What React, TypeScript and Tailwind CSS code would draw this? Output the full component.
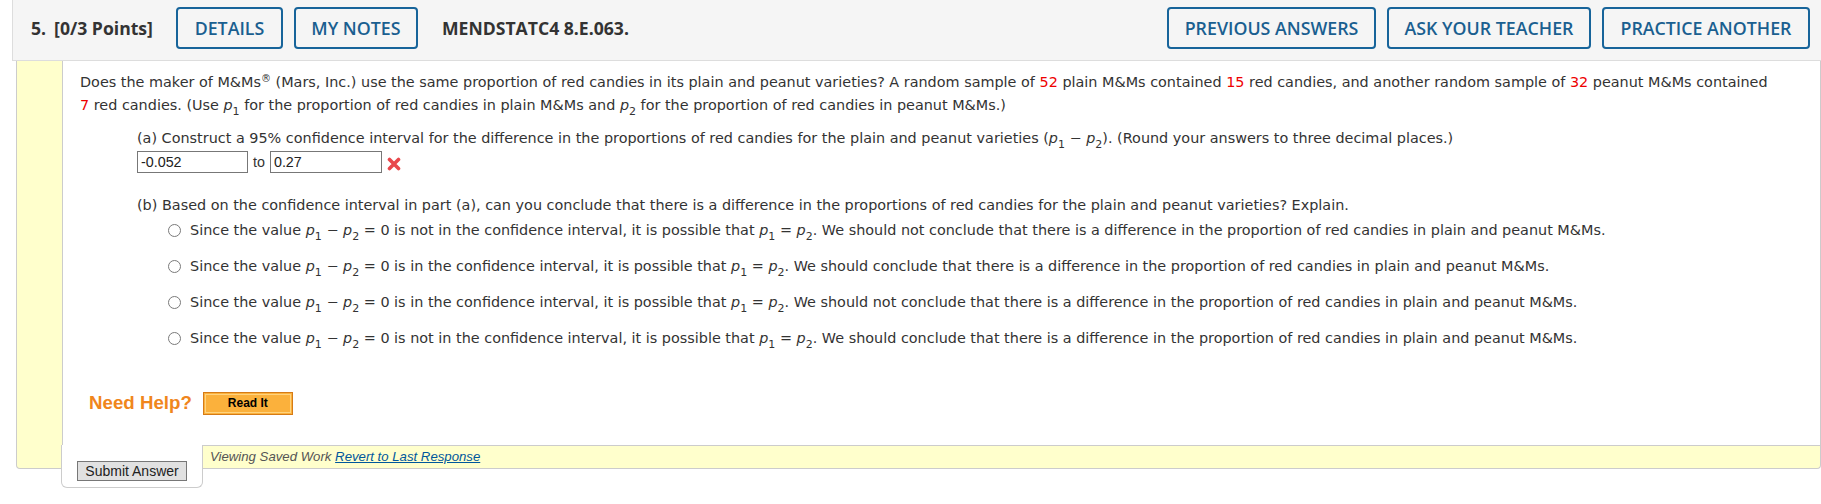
const verdana = "font-['DejaVu_Sans',Verdana,sans-serif]";
const arial = "font-['Liberation_Sans',Arial,sans-serif]";

function P({ n }: { n: string }) {
  return (
    <>
      <i>p</i>
      <sub className="text-[11px] -bottom-[5px]">{n}</sub>
    </>
  );
}

function Red({ children }: { children: React.ReactNode }) {
  return <span className="text-[#ee0000]">{children}</span>;
}

const headerBtn =
  "h-[42px] flex items-center justify-center rounded-[4px] border-2 border-[#17649a] text-[#1a5f90] text-[17.8px] font-semibold uppercase bg-[#f5f5f5]";

const choices = [
  { inCi: "is not in", should: "should not conclude" },
  { inCi: "is in", should: "should conclude" },
  { inCi: "is in", should: "should not conclude" },
  { inCi: "is not in", should: "should conclude" },
];

function Radio() {
  return (
    <span className="inline-block h-[13px] w-[13px] shrink-0 rounded-full border-[1.5px] border-[#7a7a7a] bg-white" />
  );
}

function WrongMark() {
  return (
    <svg width="14" height="14" viewBox="0 0 14 14" className="shrink-0">
      <path
        d="M2.5 2.5 L11.5 11.5 M11.5 2.5 L2.5 11.5"
        stroke="#e8474b"
        strokeWidth="3.6"
        strokeLinecap="round"
      />
    </svg>
  );
}

export default function App() {
  return (
    <div className="min-h-[504px] w-full overflow-hidden bg-white text-[#333]">
      <header className="ml-[12px] flex h-[61px] items-start border-b border-l border-[#dddddd] bg-[#f5f5f5] pl-[18px] pr-[11px] pt-[7px] font-['Open_Sans',sans-serif] text-[#333]">
        <div className="flex h-[42px] items-center">
          <span className="text-[17.6px] font-bold">5.</span>
          <span className="ml-[8px] text-[17.6px] font-bold">[0/3 Points]</span>
          <button className={`${headerBtn} ml-[23px] w-[107px]`}>Details</button>
          <button className={`${headerBtn} ml-[11px] w-[124px]`}>My Notes</button>
          <span className="ml-[24px] text-[17.6px] font-bold">MENDSTATC4 8.E.063.</span>
        </div>
        <div className="ml-auto flex h-[42px] items-center gap-[11px]">
          <button className={`${headerBtn} w-[209px]`}>Previous Answers</button>
          <button className={`${headerBtn} w-[204px]`}>Ask Your Teacher</button>
          <button className={`${headerBtn} w-[208px]`}>Practice Another</button>
        </div>
      </header>

      <div className="ml-[16px] rounded-b-[4px] border-b border-l border-r border-[#cccccc] bg-[#ffffcc] pl-[45px]">
        <div className={`h-[384px] border-l border-[#cccccc] bg-white pl-[17px] pt-[10px] text-[14.4px] leading-[23px] ${verdana}`}>
          <p className="whitespace-nowrap">
            Does the maker of M&amp;Ms<sup className="text-[10px]">®</sup> (Mars, Inc.) use the same proportion of red
            candies in its plain and peanut varieties? A random sample of <Red>52</Red> plain M&amp;Ms contained{" "}
            <Red>15</Red> red candies, and another random sample of <Red>32</Red> peanut M&amp;Ms contained
            <br />
            <Red>7</Red> red candies. (Use <P n="1" /> for the proportion of red candies in plain M&amp;Ms and{" "}
            <P n="2" /> for the proportion of red candies in peanut M&amp;Ms.)
          </p>

          <div className="ml-[57px] mt-[10px]">
            <p className="whitespace-nowrap">
              (a) Construct a 95% confidence interval for the difference in the proportions of red candies for the
              plain and peanut varieties (<P n="1" /> − <P n="2" />). (Round your answers to three decimal places.)
            </p>
            <div className={`mt-[1px] flex h-[22px] items-center ${arial}`}>
              <input
                readOnly
                value="-0.052"
                className="h-[22px] w-[111px] border border-[#777] px-[3px] text-[14.3px] text-[#222] outline-none"
              />
              <span className="mx-[5px] text-[14.3px] text-[#333]">to</span>
              <input
                readOnly
                value="0.27"
                className="h-[22px] w-[112px] border border-[#777] px-[3px] text-[14.3px] text-[#222] outline-none"
              />
              <span className="ml-[5px] mt-[4px]">
                <WrongMark />
              </span>
            </div>

            <p className="mt-[21px] whitespace-nowrap">
              (b) Based on the confidence interval in part (a), can you conclude that there is a difference in the
              proportions of red candies for the plain and peanut varieties? Explain.
            </p>
            <ul className="ml-[31px] mt-[2px] flex flex-col gap-[13px]">
              {choices.map((c, i) => (
                <li key={i} className="flex h-[23px] items-center whitespace-nowrap">
                  <Radio />
                  <span className="ml-[9px]">
                    Since the value <P n="1" /> − <P n="2" /> = 0 {c.inCi} the confidence interval, it is possible
                    that <P n="1" /> = <P n="2" />. We {c.should} that there is a difference in the proportion of red
                    candies in plain and peanut M&amp;Ms.
                  </span>
                </li>
              ))}
            </ul>
          </div>

          <div className={`ml-[9px] mt-[42px] flex h-[23px] items-center ${arial}`}>
            <span className="text-[18.7px] font-bold leading-none text-[#f0861c]">Need Help?</span>
            <button className="ml-[11px] h-[23px] w-[90px] border border-[#d67b16] bg-[#fbb13c] p-[1px]">
              <span className="flex h-full w-full items-center justify-center border border-[#ffd37f] text-[12px] font-bold text-black">
                Read It
              </span>
            </button>
          </div>
        </div>

        <div className="flex h-[23px]">
          <div className="relative z-10 -ml-px h-[43px] w-[142px] shrink-0 rounded-b-[6px] border-b border-l border-r border-[#cccccc] bg-white pl-[15px] pt-[13px]">
            <button className={`h-[20px] w-[110px] border border-[#777] bg-[#e1e1e1] text-[14px] leading-none text-[#222] ${arial}`}>
              Submit Answer
            </button>
          </div>
          <div className={`flex-1 border-t border-[#cccccc] pl-[7px] text-[13.2px] italic leading-[22px] text-[#555] ${arial}`}>
            Viewing Saved Work{" "}
            <a href="#" className="text-[#00579c] underline">
              Revert to Last Response
            </a>
          </div>
        </div>
      </div>
    </div>
  );
}
